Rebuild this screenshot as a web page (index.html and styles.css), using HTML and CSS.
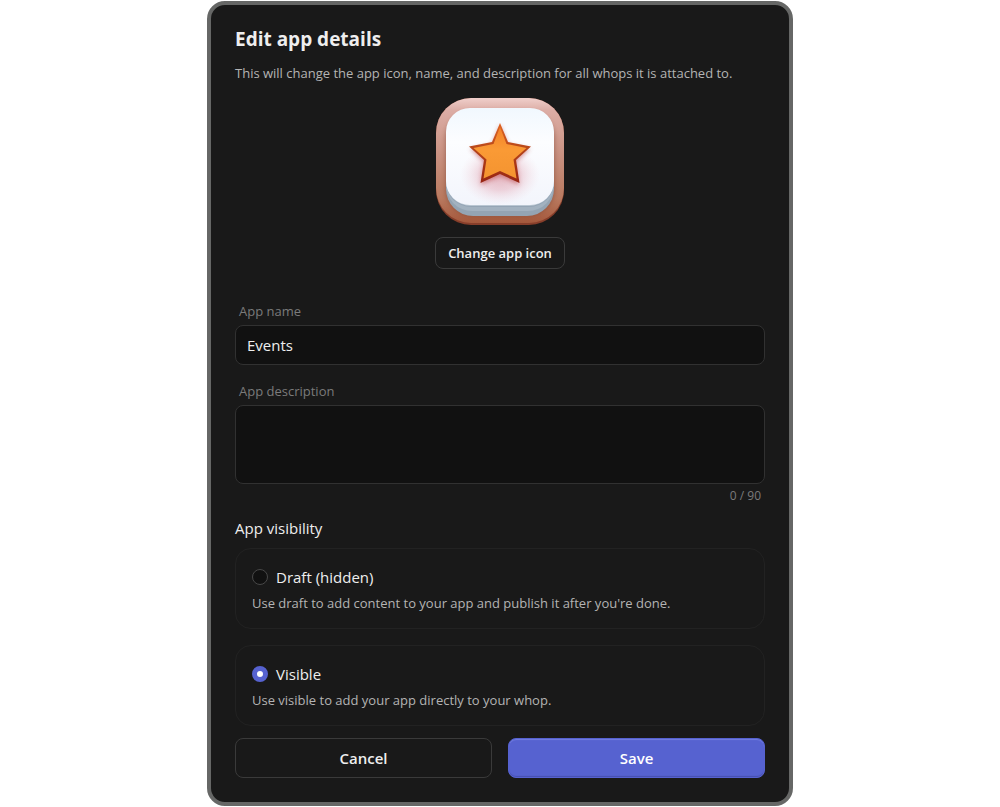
FILE: index.html
```html
<!DOCTYPE html>
<html lang="en">
<head>
    <meta charset="UTF-8">
    <meta name="viewport" content="width=device-width, initial-scale=1.0">
    <title>Edit app details</title>
    <link rel="stylesheet" href="styles.css">
</head>
<body>
    <form class="dialog">
        <h1>Edit app details</h1>
        <p class="subtitle">This will change the app icon, name, and description for all whops it is attached to.</p>

        <div class="app-icon">
            <svg class="icon-art" viewBox="0 0 128 128" aria-hidden="true">
                <defs>
                    <linearGradient id="frame" x1="0" y1="0" x2="0" y2="1">
                        <stop offset="0" stop-color="#f0cfcb"/>
                        <stop offset="0.1" stop-color="#dcada5"/>
                        <stop offset="0.45" stop-color="#c99282"/>
                        <stop offset="0.8" stop-color="#b97a60"/>
                        <stop offset="1" stop-color="#a4583c"/>
                    </linearGradient>
                    <linearGradient id="tile" x1="0" y1="0" x2="0" y2="1">
                        <stop offset="0" stop-color="#f1f8fe"/>
                        <stop offset="0.35" stop-color="#fcfdff"/>
                        <stop offset="1" stop-color="#f3f5fc"/>
                    </linearGradient>
                    <linearGradient id="star" x1="0" y1="0" x2="0" y2="1">
                        <stop offset="0" stop-color="#f37f28"/>
                        <stop offset="0.45" stop-color="#fa9a35"/>
                        <stop offset="1" stop-color="#f49430"/>
                    </linearGradient>
                    <linearGradient id="edge" x1="0" y1="0" x2="0" y2="1">
                        <stop offset="0" stop-color="#e06422"/>
                        <stop offset="0.4" stop-color="#b9481a"/>
                        <stop offset="1" stop-color="#962413"/>
                    </linearGradient>
                    <radialGradient id="glow">
                        <stop offset="0" stop-color="#c9586a" stop-opacity="0.45"/>
                        <stop offset="0.5" stop-color="#d8798a" stop-opacity="0.3"/>
                        <stop offset="1" stop-color="#f0c5d0" stop-opacity="0"/>
                    </radialGradient>
                    <filter id="soft" x="-20%" y="-20%" width="140%" height="140%">
                        <feGaussianBlur stdDeviation="2"/>
                    </filter>
                </defs>
                <rect x="0" y="1" width="128" height="127" rx="35" fill="#873e2a"/>
                <rect x="0" y="1" width="128" height="125" rx="35" fill="url(#frame)"/>
                <rect x="9" y="14" width="110" height="105" rx="27" fill="#6f3524" opacity="0.4" filter="url(#soft)"/>
                <rect x="10" y="20" width="108" height="99" rx="27" fill="#94a4b3"/>
                <rect x="10" y="16" width="108" height="98" rx="26" fill="#a3b2c0"/>
                <rect x="10" y="14" width="108" height="96" rx="25" fill="#95a5b5"/>
                <rect x="10" y="14" width="108" height="95" rx="25" fill="#bac7d3"/>
                <rect x="10" y="11" width="108" height="97" rx="24" fill="url(#tile)"/>
                <ellipse cx="64" cy="78" rx="40" ry="30" fill="url(#glow)"/>
                <path d="M64 28 L72 47 L94 52 L80 65 L83 88 L64 79 L45 88 L48 65 L34 52 L56 47 Z" fill="#b63b3c" opacity="0.5" filter="url(#soft)"/>
                <path d="M64 26 L72 45 L95 49.5 L80 63 L83.5 86 L64 77 L44.5 86 L48 63 L33 49.5 L56 45 Z" fill="url(#edge)"/>
                <path d="M64 30 L70.5 47 L90.5 51 L77.5 62.5 L80.5 81.5 L64 74 L47.5 81.5 L50.5 62.5 L37.5 51 L57.5 47 Z" fill="url(#star)"/>
            </svg>
            <button type="button" class="btn btn-small">Change app icon</button>
        </div>

        <div class="field">
            <label for="appName">App name</label>
            <input type="text" id="appName" value="Events">
        </div>

        <div class="field">
            <label for="appDescription">App description</label>
            <textarea id="appDescription" maxlength="90"></textarea>
            <span class="counter">0 / 90</span>
        </div>

        <fieldset class="visibility">
            <legend>App visibility</legend>
            <label class="option">
                <span class="option-title"><input type="radio" name="visibility" value="draft">Draft (hidden)</span>
                <span class="option-text">Use draft to add content to your app and publish it after you're done.</span>
            </label>
            <label class="option">
                <span class="option-title"><input type="radio" name="visibility" value="visible" checked>Visible</span>
                <span class="option-text">Use visible to add your app directly to your whop.</span>
            </label>
        </fieldset>

        <div class="actions">
            <button type="button" class="btn">Cancel</button>
            <button type="submit" class="btn btn-primary">Save</button>
        </div>
    </form>
</body>
</html>
```
FILE: styles.css
```css
* {
    box-sizing: border-box;
}
body {
    margin: 0;
    background: white;
    color: #eeeeee;
    font-family: "Segoe UI", "Open Sans", "Noto Sans", sans-serif;
    font-size: 13px;
    line-height: 20px;
}
.dialog {
    width: 100%;
    max-width: 586px;
    margin: 1px auto 0;
    padding: 20px 24px 24px;
    background: #191919;
    border: 4px solid #666766;
    border-radius: 18px;
}
h1 {
    margin: 0 0 10px;
    font-size: 19px;
    font-weight: 700;
    line-height: 28px;
}
.subtitle {
    margin: 0;
    color: #b4b4b4;
}
.app-icon {
    display: flex;
    flex-direction: column;
    align-items: center;
    gap: 12px;
    margin: 14px 0 32px;
}
.icon-art {
    width: 128px;
    height: 128px;
}
.btn {
    height: 40px;
    padding: 0 12px;
    background: transparent;
    border: 1px solid #3a3a3a;
    border-radius: 8px;
    color: #eeeeee;
    font-family: inherit;
    font-size: 15px;
    font-weight: 600;
    cursor: pointer;
}
.btn-small {
    height: 32px;
    font-size: 13px;
}
.btn-primary {
    background: #5662d0;
    border-color: #5662d0;
    box-shadow: inset 0 1px 1px #737ee2, inset 0 -1px 1px #4750b0;
    color: white;
}
.field {
    display: flex;
    flex-direction: column;
    margin-bottom: 16px;
}
.field label {
    margin: 0 4px 4px;
    color: #7b7b7b;
}
.field input,
.field textarea {
    width: 100%;
    height: 40px;
    padding: 0 11px;
    background: #111111;
    border: 1px solid #313131;
    border-radius: 8px;
    color: #eeeeee;
    font-family: inherit;
    font-size: 15px;
}
.field textarea {
    height: 79px;
    padding: 8px 11px;
    resize: none;
}
.counter {
    align-self: flex-end;
    margin: 4px 4px 0;
    font-size: 12px;
    line-height: 16px;
    color: #7b7b7b;
}
.visibility {
    display: flex;
    flex-direction: column;
    gap: 16px;
    min-width: 0;
    margin: -4px 0 12px;
    padding: 0;
    border: 0;
}
.visibility legend {
    margin-bottom: 8px;
    padding: 0;
    font-size: 15px;
    line-height: 24px;
}
.option {
    display: flex;
    flex-direction: column;
    gap: 4px;
    padding: 16px 16px 15px;
    border: 1px solid #222222;
    border-radius: 16px;
}
.option-title {
    display: flex;
    align-items: center;
    gap: 8px;
    font-size: 15px;
    line-height: 24px;
}
.option-text {
    color: #b4b4b4;
}
.option input {
    appearance: none;
    width: 16px;
    height: 16px;
    margin: 0;
    background: #111111;
    border: 1px solid #484848;
    border-radius: 50%;
}
.option input:checked {
    background: white;
    border: 5px solid #5662d0;
}
.actions {
    display: grid;
    grid-template-columns: 1fr 1fr;
    gap: 16px;
}
```
